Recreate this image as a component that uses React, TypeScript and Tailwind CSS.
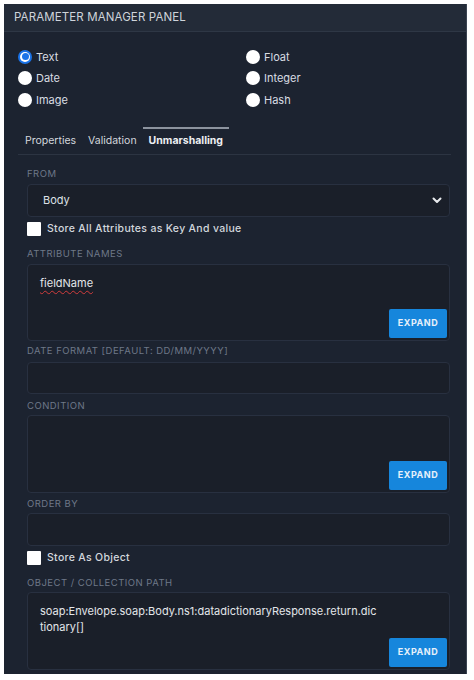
import React from "react";

function Radio({ label, checked }: { label: string; checked?: boolean }) {
  return (
    <div className="flex items-center h-[21.5px]">
      {checked ? (
        <span className="w-[14px] h-[14px] rounded-full bg-[#1a73e8] flex items-center justify-center">
          <span className="w-[10px] h-[10px] rounded-full bg-white flex items-center justify-center">
            <span className="w-[7px] h-[7px] rounded-full bg-[#1a73e8]" />
          </span>
        </span>
      ) : (
        <span className="w-[14px] h-[14px] rounded-full bg-white" />
      )}
      <span className="ml-[4px] text-[11px] text-[#d9dde3]">{label}</span>
    </div>
  );
}

function Label({ children }: { children: React.ReactNode }) {
  return (
    <div className="text-[9.5px] tracking-[0.05em] text-[#6e7888] uppercase h-[9px] flex items-center">
      {children}
    </div>
  );
}

function Expand() {
  return (
    <button className="absolute right-[2px] bottom-[2px] w-[58px] h-[29px] bg-[#1686dc] rounded-[2px] text-[9px] font-bold tracking-[0.06em] text-[#e6f0fa]">
      EXPAND
    </button>
  );
}

function Checkbox({ label }: { label: string }) {
  return (
    <div className="flex items-center h-[14px]">
      <span className="w-[14px] h-[14px] bg-white rounded-[1px]" />
      <span className="ml-[6px] text-[10.5px] font-medium tracking-[0.03em] text-[#d3d7dd]">{label}</span>
    </div>
  );
}

export default function App() {
  return (
    <div className="bg-white w-[474px] h-[680px] pt-[4px] pl-[4px]" style={{ fontFamily: "Inter, 'Noto Sans', sans-serif" }}>
      <div className="w-[463px] h-[670px] bg-[#1c2330] border-r border-[#3b4452] flex flex-col">
        <div className="h-[28px] bg-[#232b38] border-b border-[#2e3745] flex items-center pl-[10px] text-[11.5px] text-[#cfd4db] tracking-[0.01em]">
          PARAMETER MANAGER PANEL
        </div>
        <div className="grid grid-cols-[228px_1fr] pl-[14px] pt-[14px]">
          <div>
            <Radio label="Text" checked />
            <Radio label="Date" />
            <Radio label="Image" />
          </div>
          <div>
            <Radio label="Float" />
            <Radio label="Integer" />
            <Radio label="Hash" />
          </div>
        </div>
        <div className="mt-[17px] ml-[14px] mr-[15px] border-b border-[#2c3442] flex items-end h-[27px] text-[10.5px]">
          <div className="pl-[7px] pr-[6px] pb-[5px] text-[#d3d7dd]">Properties</div>
          <div className="px-[6px] pb-[5px] text-[#d3d7dd]">Validation</div>
          <div className="relative px-[6px] pb-[5px] font-bold text-[#eef0f3]">
            <span className="absolute left-0 right-0 top-[-6px] h-[2px] bg-[#8c939e]" />
            Unmarshalling
          </div>
        </div>
        <div className="pl-[23px] pr-[16px] pt-[15px] flex flex-col">
          <Label>From</Label>
          <div className="mt-[5px] h-[33px] rounded-[4px] bg-[#1a1f29] border border-[#283040] flex items-center justify-between pl-[15px] pr-[6px]">
            <span className="text-[11px] text-[#dde1e6]">Body</span>
            <svg width="12" height="12" viewBox="0 0 12 12"><path d="M2.5 4.5 L6 8 L9.5 4.5" stroke="#e8eaed" strokeWidth="2" fill="none" strokeLinecap="round" strokeLinejoin="round" /></svg>
          </div>
          <div className="mt-[5px]"><Checkbox label="Store All Attributes as Key And value" /></div>
          <div className="mt-[14px]"><Label>Attribute Names</Label></div>
          <div className="relative mt-[5px] h-[77px] rounded-[4px] bg-[#1a1f29] border border-[#283040] flex flex-col">
            <div className="ml-[12px] mt-[10px] text-[11px] leading-[16px] text-[#e3e6ea]">
              <span className="underline decoration-wavy decoration-[#d23c3c] underline-offset-[3px] decoration-[1px]">fieldName</span>
            </div>
            <Expand />
          </div>
          <div className="mt-[6px]"><Label>Date Format [Default: DD/MM/YYYY]</Label></div>
          <div className="mt-[6px] h-[32px] rounded-[4px] bg-[#1a1f29] border border-[#283040]" />
          <div className="mt-[8px]"><Label>Condition</Label></div>
          <div className="relative mt-[4px] h-[78px] rounded-[4px] bg-[#1a1f29] border border-[#283040]">
            <Expand />
          </div>
          <div className="mt-[7px]"><Label>Order By</Label></div>
          <div className="mt-[4px] h-[33px] rounded-[4px] bg-[#1a1f29] border border-[#283040]" />
          <div className="mt-[5px]"><Checkbox label="Store As Object" /></div>
          <div className="mt-[14px]"><Label>Object / Collection Path</Label></div>
          <div className="relative mt-[4px] h-[78px] rounded-[4px] bg-[#1a1f29] border border-[#283040] flex flex-col">
            <div className="ml-[12px] mt-[10px] text-[11px] leading-[16px] text-[#e3e6ea]">
              soap:Envelope.soap:Body.ns1:datadictionaryResponse.return.dic
              <br />
              tionary[]
            </div>
            <Expand />
          </div>
        </div>
      </div>
    </div>
  );
}
